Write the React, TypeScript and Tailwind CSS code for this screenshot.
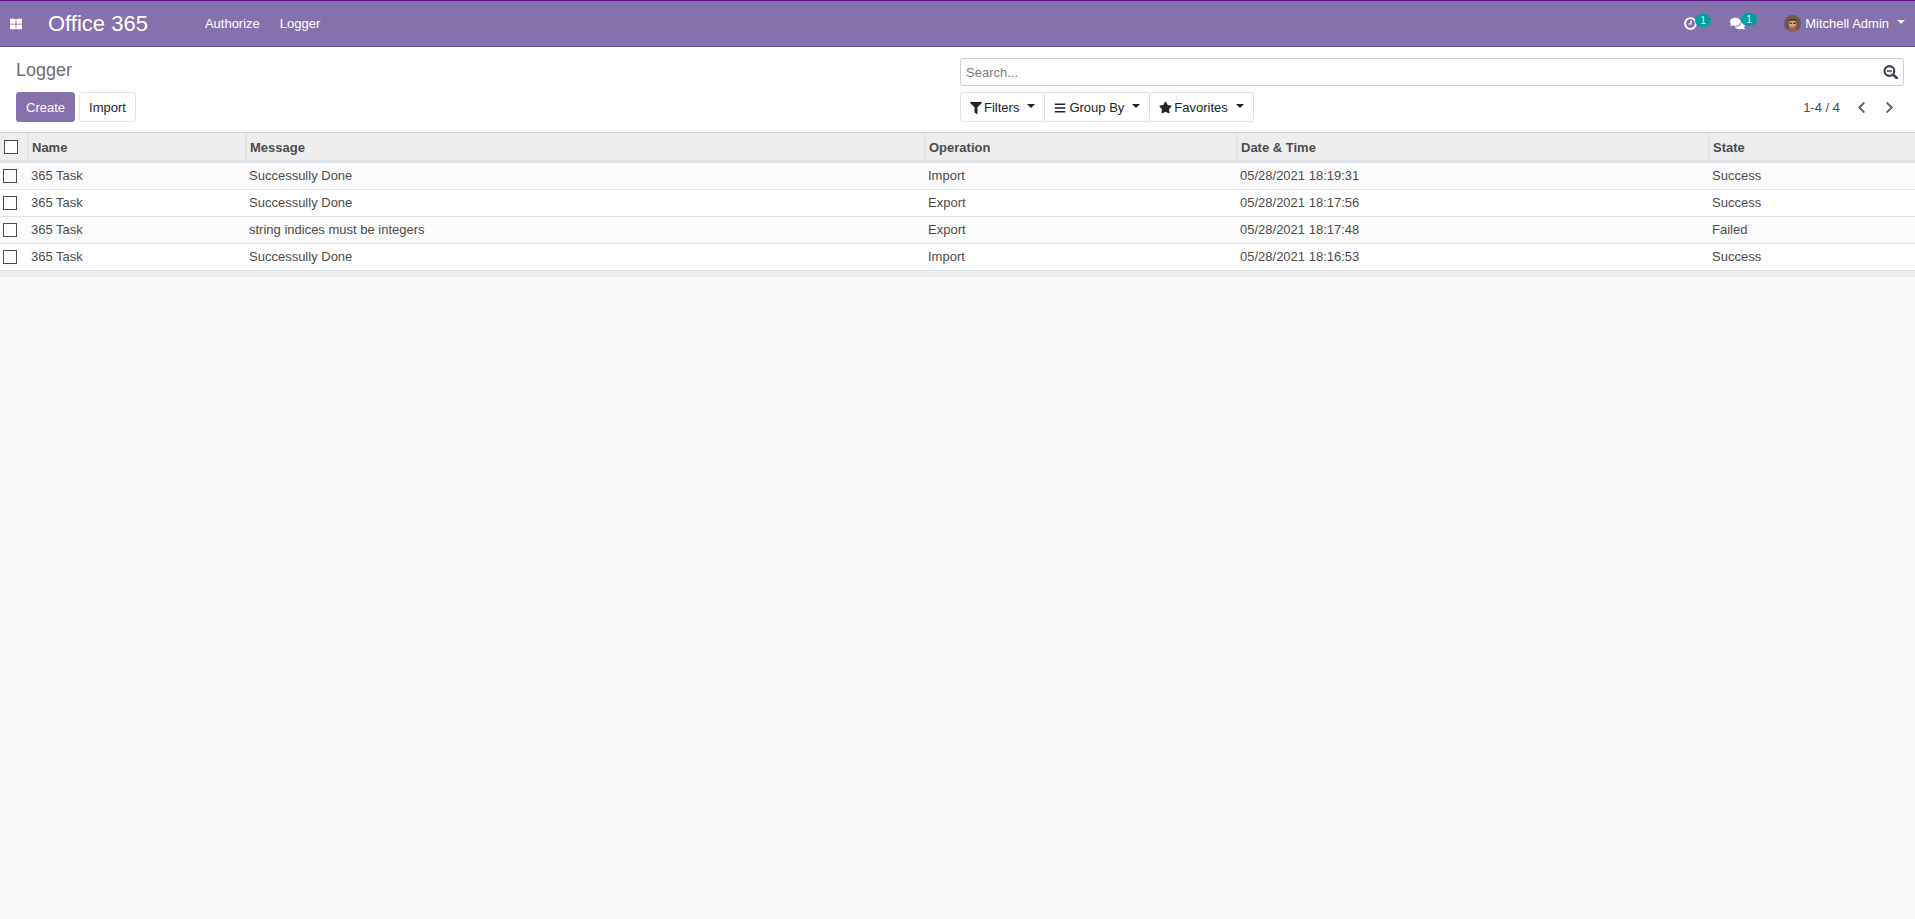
import type { ReactNode } from 'react'
import { FaThLarge, FaFilter, FaBars, FaStar, FaComments, FaChevronLeft, FaChevronRight } from 'react-icons/fa'

const ROWS = [
  { message: 'Successully Done', operation: 'Import', date: '05/28/2021 18:19:31', state: 'Success' },
  { message: 'Successully Done', operation: 'Export', date: '05/28/2021 18:17:56', state: 'Success' },
  { message: 'string indices must be integers', operation: 'Export', date: '05/28/2021 18:17:48', state: 'Failed' },
  { message: 'Successully Done', operation: 'Import', date: '05/28/2021 18:16:53', state: 'Success' },
]

function Caret() {
  return <span className="ml-[8px] mb-[3px] inline-block border-x-[4px] border-t-[4px] border-x-transparent border-t-current" />
}

function Badge() {
  return (
    <span className="absolute -top-[3px] left-[11px] rounded-[7px] bg-[#00a09d] px-[5px] text-[10px] leading-[13px] text-[#e6f5e8]">
      1
    </span>
  )
}

function Clock() {
  return (
    <svg viewBox="0 0 13 13" className="block h-[13px] w-[13px]" fill="none" stroke="white">
      <circle cx="6.5" cy="6.5" r="5.4" strokeWidth="1.9" />
      <path d="M7 3.4v3.6H4.2" strokeWidth="1.2" />
    </svg>
  )
}

function Avatar() {
  return (
    <svg viewBox="0 0 18 18" className="h-[17px] w-[17px] rounded-full">
      <rect width="18" height="18" fill="#6e5a4c" />
      <ellipse cx="9" cy="9" rx="4" ry="5" fill="#d8a68c" />
      <path d="M4.5 7C5 3 13 3 13.5 7 11 5.5 7 5.5 4.5 7z" fill="#3b2a22" />
      <path d="M5.5 8h3v1.5h-3zM9.5 8h3v1.5h-3z" fill="#5a3a32" />
      <path d="M5 12h8v6H5z" fill="#a8684f" opacity="0.7" />
    </svg>
  )
}

function SearchIcon() {
  return (
    <svg viewBox="0 0 15 14" className="h-[14px] w-[15px]" fill="none" stroke="#3a424c">
      <circle cx="6.4" cy="6" r="4.9" strokeWidth="2.1" />
      <path d="M3.9 6h5" strokeWidth="1.5" />
      <path d="M10.2 9.8l3.6 3.2" strokeWidth="2.6" strokeLinecap="round" />
    </svg>
  )
}

function Check({ head }: { head?: boolean }) {
  return <span className={`block h-[14px] w-[14px] border border-[#4c4c4c] bg-white ${head ? 'ml-[4px]' : 'ml-[3px]'}`} />
}

function FilterButton({ icon, iconClass, label }: { icon: ReactNode; iconClass: string; label: string }) {
  return (
    <button className="-mr-px flex h-[30px] items-center rounded-[3px] border border-[#dee2e6] bg-white px-[9px] pt-px text-[#212529]">
      <span className={iconClass}>{icon}</span>
      {label}
      <Caret />
    </button>
  )
}

export default function App() {
  return (
    <div className="flex min-h-[919px] flex-col bg-[#f9f9f9] font-['Liberation_Sans',sans-serif] text-[13px] text-[#4c4c4c]">
      {/* navbar */}
      <header className="flex h-[47px] items-center border-t border-b border-t-[#5f0f8a] border-b-[#5f4b8b] bg-[#8571ab] pr-[10px] text-white">
        <FaThLarge className="ml-[10px] text-[12px]" />
        <span className="ml-[26px] text-[22px]">Office 365</span>
        <nav className="ml-[57px] flex gap-[20px]">
          <span>Authorize</span>
          <span>Logger</span>
        </nav>
        <div className="ml-auto flex items-center">
          <span className="relative mr-[33px]">
            <Clock />
            <Badge />
          </span>
          <span className="relative mr-[39px] text-[15px]">
            <FaComments />
            <Badge />
          </span>
          <Avatar />
          <span className="ml-[4px]">Mitchell Admin</span>
          <Caret />
        </div>
      </header>

      {/* control panel */}
      <section className="flex h-[85px] justify-between bg-white pl-[16px] pr-[11px]">
        <div>
          <h1 className="mt-[12px] text-[18px] leading-[22px] text-[#6e6e6e]">Logger</h1>
          <div className="mt-[11px] flex gap-[4px]">
            <button className="h-[30px] rounded-[3px] border border-[#8571ab] bg-[#8571ab] px-[9px] pt-px text-white">Create</button>
            <button className="h-[30px] rounded-[3px] border border-[#dee2e6] bg-white px-[9px] pt-px text-[#212529]">Import</button>
          </div>
        </div>
        <div className="mt-[11px] w-[944px]">
          <div className="flex h-[28px] items-center justify-between rounded-[3px] border border-[#ccc] bg-white px-[5px] text-[#7c7c7c]">
            <span className="pt-px">Search...</span>
            <SearchIcon />
          </div>
          <div className="mt-[6px] flex items-center">
            <FilterButton icon={<FaFilter />} iconClass="mr-[2px] text-[12px]" label="Filters" />
            <FilterButton icon={<FaBars />} iconClass="mr-[3px] text-[12px]" label="Group By" />
            <FilterButton icon={<FaStar />} iconClass="mr-[2px] text-[13px]" label="Favorites" />
            <span className="ml-auto pt-px text-[#4c4c4c]">1-4 / 4</span>
            <FaChevronLeft className="ml-[15px] text-[13px] text-[#666]" />
            <FaChevronRight className="ml-[15px] mr-[8px] text-[13px] text-[#666]" />
          </div>
        </div>
      </section>

      {/* list */}
      <table className="w-full table-fixed border-separate border-spacing-0 border-t border-[#d5d5d5]">
        <colgroup>
          <col className="w-[27px]" />
          <col className="w-[218px]" />
          <col className="w-[679px]" />
          <col className="w-[312px]" />
          <col className="w-[472px]" />
          <col />
        </colgroup>
        <thead>
          <tr className="bg-[#eeeeee] text-left font-bold">
            <th className="h-[30px] border-b-[3px] border-[#dee2e6] p-0 pt-[1px]"><Check head /></th>
            <th className="h-[30px] border-b-[3px] border-l-2 border-b-[#dee2e6] border-l-[#e4e4e4] pl-[3px] pt-[2px]">Name</th>
            <th className="h-[30px] border-b-[3px] border-l-2 border-b-[#dee2e6] border-l-[#e4e4e4] pl-[3px] pt-[2px]">Message</th>
            <th className="h-[30px] border-b-[3px] border-l-2 border-b-[#dee2e6] border-l-[#e4e4e4] pl-[3px] pt-[2px]">Operation</th>
            <th className="h-[30px] border-b-[3px] border-l-2 border-b-[#dee2e6] border-l-[#e4e4e4] pl-[3px] pt-[2px]">Date &amp; Time</th>
            <th className="h-[30px] border-b-[3px] border-l-2 border-b-[#dee2e6] border-l-[#e4e4e4] pl-[3px] pt-[2px]">State</th>
          </tr>
        </thead>
        <tbody>
          {ROWS.map((row, i) => (
            <tr key={i} className={i % 2 === 0 ? 'bg-[#fbfbfb]' : 'bg-white'}>
              <td className="h-[27px] border-b border-[#dee2e6] p-0"><Check /></td>
              <td className="h-[27px] border-b border-[#dee2e6] pl-[4px]">365 Task</td>
              <td className="h-[27px] border-b border-[#dee2e6] pl-[4px]">{row.message}</td>
              <td className="h-[27px] border-b border-[#dee2e6] pl-[4px]">{row.operation}</td>
              <td className="h-[27px] border-b border-[#dee2e6] pl-[4px]">{row.date}</td>
              <td className="h-[27px] border-b border-[#dee2e6] pl-[4px]">{row.state}</td>
            </tr>
          ))}
        </tbody>
      </table>
      <div className="h-[6px] bg-[#eeeeee]" />
    </div>
  )
}
